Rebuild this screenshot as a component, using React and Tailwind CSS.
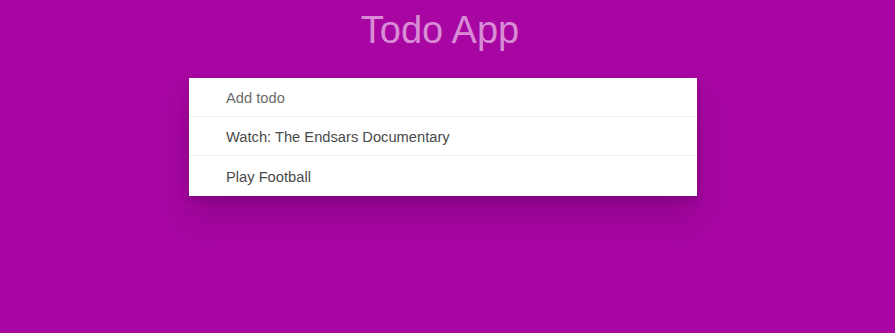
export default function App() {
  const todos = ["Watch: The Endsars Documentary", "Play Football"];
  return (
    <div className="min-h-[333px] w-full bg-[#a706a2] pt-[7px]" style={{ fontFamily: '"Liberation Sans", Arial, sans-serif' }}>
      <h1 className="w-[880px] text-center text-[38px] leading-[46px] text-[#d98bd6] font-normal">Todo App</h1>
      <div className="ml-[189px] mt-[25px] w-[508px] bg-white shadow-[0_4px_8px_rgba(0,0,0,0.12),0_20px_30px_rgba(80,0,80,0.25)]">
        <div className="flex h-[39px] items-center border-b border-[#f0f0f0] pl-[37px] pt-[2px] text-[14.7px] text-[#6b6b6b]">Add todo</div>
        {todos.map((t, i) => (
          <div key={i} className={`flex items-center pl-[37px] pt-[2px] text-[14.7px] text-[#4a4a4a] ${i < todos.length - 1 ? "h-[39px] border-b border-[#f0f0f0]" : "h-[40px]"}`}>{t}</div>
        ))}
      </div>
    </div>
  );
}
